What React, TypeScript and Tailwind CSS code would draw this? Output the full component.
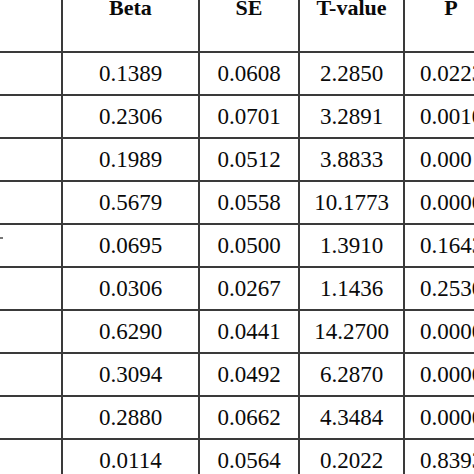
import React from "react";

const rows: string[][] = [
  ["0.1389", "0.0608", "2.2850", "0.0223"],
  ["0.2306", "0.0701", "3.2891", "0.0010"],
  ["0.1989", "0.0512", "3.8833", "0.000"],
  ["0.5679", "0.0558", "10.1773", "0.0000"],
  ["0.0695", "0.0500", "1.3910", "0.1643"],
  ["0.0306", "0.0267", "1.1436", "0.2530"],
  ["0.6290", "0.0441", "14.2700", "0.0000"],
  ["0.3094", "0.0492", "6.2870", "0.0000"],
  ["0.2880", "0.0662", "4.3484", "0.0000"],
  ["0.0114", "0.0564", "0.2022", "0.8393"],
];

const cols = "grid grid-cols-[63px_137px_100px_105px_92px] w-[497px]";

export default function App() {
  return (
    <div
      className="w-[474px] h-[474px] overflow-hidden bg-white text-[#0a0a0a]"
      style={{ fontFamily: '"Liberation Serif", "Times New Roman", serif' }}
    >
      {/* header */}
      <div className={`${cols} h-[53px] border-b-2 border-[#3a3a3a] font-bold text-[22px]`}>
        <div className="border-r-2 border-[#3a3a3a]" />
        <div className="border-r-2 border-[#3a3a3a] flex justify-center items-start">
          <span className="leading-[22px] -mt-[3px]">Beta</span>
        </div>
        <div className="border-r-2 border-[#3a3a3a] flex justify-center items-start">
          <span className="leading-[22px] -mt-[3px]">SE</span>
        </div>
        <div className="border-r-2 border-[#3a3a3a] flex justify-center items-start">
          <span className="leading-[22px] -mt-[3px]">T-value</span>
        </div>
        <div className="flex justify-center items-start">
          <span className="leading-[22px] -mt-[3px]">P</span>
        </div>
      </div>

      {rows.map((r, i) => (
        <div key={i} className={`${cols} h-[43px] border-b-2 border-[#3a3a3a] text-[23px]`}>
          <div className="border-r-2 border-[#3a3a3a] relative">
            {i === 4 && (
              <span className="absolute left-0 top-[12px] w-[3px] h-[2px] bg-[#777]" />
            )}
          </div>
          <div className="border-r-2 border-[#3a3a3a] flex justify-center items-center leading-none">
            {r[0]}
          </div>
          <div className="border-r-2 border-[#3a3a3a] flex justify-center items-center leading-none">
            {r[1]}
          </div>
          <div className="border-r-2 border-[#3a3a3a] flex justify-center items-center leading-none">
            {r[2]}
          </div>
          <div className="flex items-center pl-[15px] leading-none">{r[3]}</div>
        </div>
      ))}
    </div>
  );
}
